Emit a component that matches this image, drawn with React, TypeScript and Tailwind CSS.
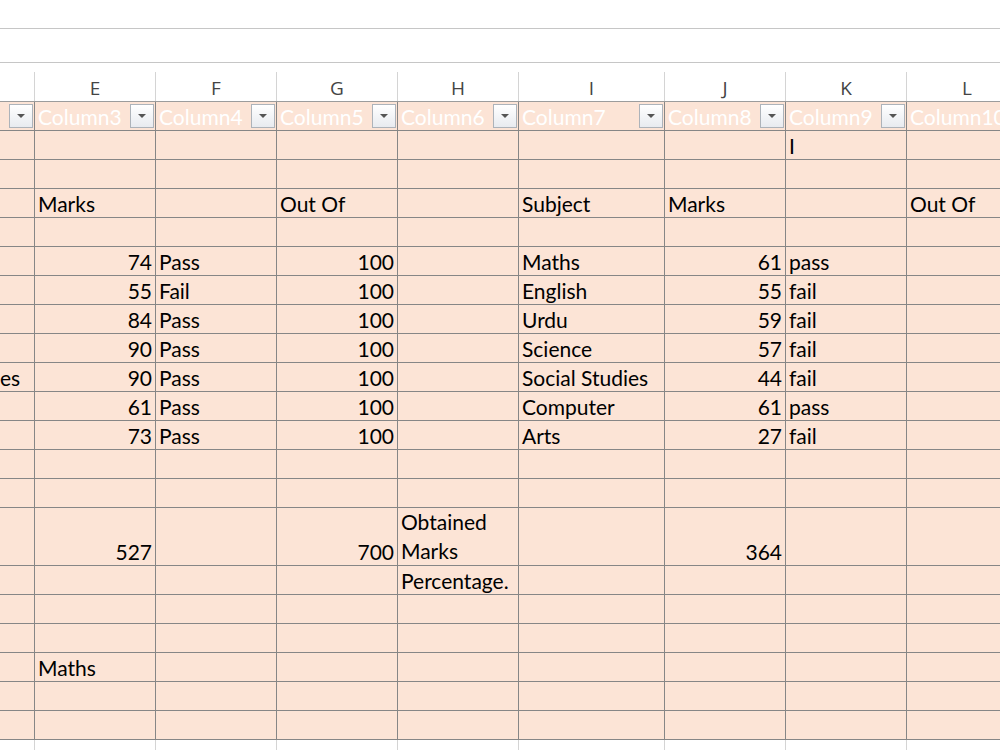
import React from "react";

type Cell = { t?: string; r?: boolean; wrap?: boolean; clip?: boolean };
type Row = { tall?: boolean; cells: Cell[] };

const colW = ["w-[35px]", "w-[121px]", "w-[121px]", "w-[121px]", "w-[121px]", "w-[146px]", "w-[121px]", "w-[121px]", "w-[121px]"];
const letters = ["", "E", "F", "G", "H", "I", "J", "K", "L"];
const headers = ["", "Column3", "Column4", "Column5", "Column6", "Column7", "Column8", "Column9", "Column10"];

const empty = (): Row => ({ cells: Array.from({ length: 9 }, () => ({})) });

function put(entries: Record<number, Cell>, tall?: boolean): Row {
    const row = empty();
    Object.entries(entries).forEach(([k, v]) => (row.cells[Number(k)] = v));
    row.tall = tall;
    return row;
}

// marks, result, out of, subject2, marks2, result2
const marks: [string, string, string, string, string, string][] = [
    ["74", "Pass", "100", "Maths", "61", "pass"],
    ["55", "Fail", "100", "English", "55", "fail"],
    ["84", "Pass", "100", "Urdu", "59", "fail"],
    ["90", "Pass", "100", "Science", "57", "fail"],
    ["90", "Pass", "100", "Social Studies", "44", "fail"],
    ["61", "Pass", "100", "Computer", "61", "pass"],
    ["73", "Pass", "100", "Arts", "27", "fail"],
];

const rows: Row[] = [
    put({ 7: { t: "I" } }),
    empty(),
    put({ 1: { t: "Marks" }, 3: { t: "Out Of" }, 5: { t: "Subject" }, 6: { t: "Marks" }, 8: { t: "Out Of" } }),
    empty(),
    ...marks.map((m, i) =>
        put({
            ...(i === 4 ? { 0: { t: "es", clip: true } } : {}),
            1: { t: m[0], r: true },
            2: { t: m[1] },
            3: { t: m[2], r: true },
            5: { t: m[3] },
            6: { t: m[4], r: true },
            7: { t: m[5] },
        })
    ),
    empty(),
    empty(),
    put({ 1: { t: "527", r: true }, 3: { t: "700", r: true }, 4: { t: "Obtained Marks", wrap: true }, 6: { t: "364", r: true } }, true),
    put({ 4: { t: "Percentage." } }),
    empty(),
    empty(),
    put({ 1: { t: "Maths" } }),
    empty(),
    empty(),
];

function Dropdown() {
    return (
        <div className="ml-auto mr-[1px] w-[24px] h-[24px] shrink-0 border border-[#adb3ba] bg-linear-to-b from-white to-[#e8ebf0] flex items-center justify-center">
            <div className="w-0 h-0 border-l-[4px] border-r-[4px] border-t-[4px] border-l-transparent border-r-transparent border-t-[#555]" />
        </div>
    );
}

export default function App() {
    return (
        <div className="w-[1000px] h-[750px] overflow-hidden bg-white font-['Lato',sans-serif] text-[21px] text-black">
            <div className="h-[29px] border-b border-[#c6c6c6]" />
            <div className="h-[34px] border-b border-[#c6c6c6]" />
            <div className="h-[9px]" />

            {/* column letters */}
            <div className="flex h-[30px] border-b border-[#9c9c9c] font-['Open_Sans',sans-serif] text-[19px] text-[#444]">
                {letters.map((l, i) => (
                    <div key={i} className={`${colW[i]} shrink-0 border-r border-[#d4d4d4] flex items-center justify-center pt-[3px]`}>{l}</div>
                ))}
            </div>

            {/* table header */}
            <div className="flex h-[29px] bg-[#fce4d6] border-b border-[#868686]">
                {headers.map((h, i) => (
                    <div key={i} className={`${colW[i]} shrink-0 border-r border-[#868686] flex items-center pl-[3px] overflow-hidden`}>
                        <span className="text-white whitespace-nowrap leading-[28px] pt-[1px]">{h}</span>
                        {i < 8 && <Dropdown />}
                    </div>
                ))}
            </div>

            {rows.map((row, ri) => (
                <div key={ri} className={`flex bg-[#fce4d6] border-b border-[#868686] ${row.tall ? "h-[58px]" : "h-[29px]"}`}>
                    {row.cells.map((c, ci) => (
                        <div
                            key={ci}
                            className={`${colW[ci]} shrink-0 border-r border-[#868686] overflow-hidden flex items-end leading-[27px] ${c.wrap ? "flex-col justify-end items-start leading-[29px]" : ""} ${c.r ? "justify-end pr-[3px]" : c.clip ? "pl-0" : "pl-[3px]"} ${c.wrap ? "whitespace-normal" : "whitespace-nowrap"}`}
                        >
                            {c.t}
                        </div>
                    ))}
                </div>
            ))}

            {/* empty sheet below table */}
            <div className="flex h-[20px]">
                {colW.map((w, i) => (
                    <div key={i} className={`${w} shrink-0 border-r border-[#d4d4d4]`} />
                ))}
            </div>
        </div>
    );
}
